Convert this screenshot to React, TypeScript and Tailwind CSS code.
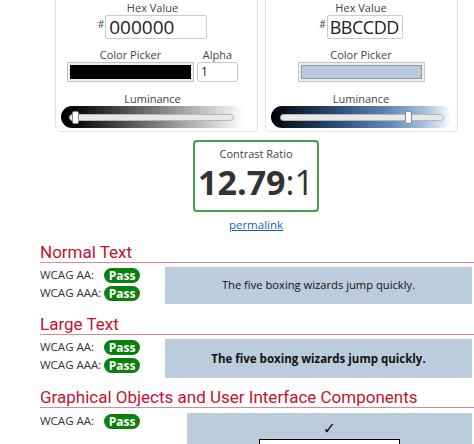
import React from 'react'

function Badge() {
  return (
    <span className="inline-block w-[36px] h-[15px] rounded-full bg-[#0c800c] text-white font-bold text-[12px] leading-[15px] text-center">
      Pass
    </span>
  )
}

function WcagRow({ label }: { label: string }) {
  return (
    <div className="flex items-center h-[18px]">
      <span className="w-[64px] text-[11.5px] text-[#333]">{label}</span>
      <Badge />
    </div>
  )
}

function Heading({ children }: { children: React.ReactNode }) {
  return (
    <h2 className="font-['Roboto',sans-serif] text-[17px] leading-[20px] text-[#c41230] border-b border-[#e2878f]">
      {children}
    </h2>
  )
}

export default function App() {
  return (
    <div className="w-[474px] h-[444px] overflow-hidden bg-white font-['Open_Sans',sans-serif] text-[#333]">
      <div className="w-[512px] flex flex-col">
        {/* Colour cards */}
        <div className="-mt-[13px] flex justify-center gap-[7px]">
          <div className="w-[203px] h-[145px] border border-[#e4e4e4] rounded-[5px] flex flex-col items-center pt-[13px] pr-[7px]">
            <div className="text-[11px] leading-[14px] text-[#444]">Hex Value</div>
            <div className="flex">
              <span className="text-[10px] leading-[10px] mt-[4px] mr-[1px] text-[#444]">#</span>
              <div className="w-[102px] h-[24px] border border-[#ccc] rounded-[2px] text-[19px] leading-[22px] pl-[3px] text-[#222]">
                000000
              </div>
            </div>
            <div className="flex items-end gap-[3px] mt-[8px]">
              <div className="flex flex-col items-center">
                <div className="text-[11px] leading-[15px] text-[#444]">Color Picker</div>
                <div className="w-[127px] h-[20px] border border-[#c4c4c4] bg-[#efefef] p-[2px]">
                  <div className="w-full h-full bg-black" />
                </div>
              </div>
              <div className="flex flex-col items-center">
                <div className="text-[11px] leading-[15px] text-[#444]">Alpha</div>
                <div className="w-[41px] h-[20px] border border-[#ccc] rounded-[2px] text-[12px] leading-[18px] pl-[3px] text-[#222]">
                  1
                </div>
              </div>
            </div>
            <div className="mt-[10px] text-[11px] leading-[14px] text-[#444]">Luminance</div>
            <div className="w-[184px] h-[22px] rounded-full bg-[linear-gradient(to_right,#000_0%,#000_5%,#777_50%,#fff_100%)] flex items-center pl-[8px] pr-[11px]">
              <div className="relative flex-1 h-[7px] rounded-full bg-[#e8e8e8] border border-[#b5b5b5]">
                <div className="absolute left-[2px] -top-[4px] w-[7px] h-[13px] rounded-[2px] bg-white border border-[#888]" />
              </div>
            </div>
          </div>

          <div className="w-[193px] h-[145px] border border-[#e4e4e4] rounded-[5px] flex flex-col items-center pt-[13px]">
            <div className="text-[11px] leading-[14px] text-[#444]">Hex Value</div>
            <div className="flex">
              <span className="text-[10px] leading-[10px] mt-[4px] mr-[1px] text-[#444]">#</span>
              <div className="w-[76px] h-[24px] border border-[#ccc] rounded-[2px] text-[18px] leading-[22px] tracking-[-0.5px] pl-[2px] text-[#222]">
                BBCCDD
              </div>
            </div>
            <div className="flex flex-col items-center mt-[8px]">
              <div className="text-[11px] leading-[15px] text-[#444]">Color Picker</div>
              <div className="w-[127px] h-[20px] border border-[#c4c4c4] bg-[#efefef] p-[2px]">
                <div className="w-full h-full bg-[#bbccdd] border border-[#8a98a6]" />
              </div>
            </div>
            <div className="mt-[10px] text-[11px] leading-[14px] text-[#444]">Luminance</div>
            <div className="w-[181px] h-[22px] rounded-full bg-[linear-gradient(to_right,#000_0%,#0a1520_8%,#2a4a72_35%,#5f88bb_65%,#aac0dc_85%,#fff_100%)] flex items-center pl-[9px] pr-[8px]">
              <div className="relative flex-1 h-[7px] rounded-full bg-[#e8e8e8] border border-[#b5b5b5]">
                <div className="absolute left-[124px] -top-[4px] w-[7px] h-[13px] rounded-[2px] bg-white border border-[#888]" />
              </div>
            </div>
          </div>
        </div>

        {/* Contrast ratio */}
        <div className="mt-[8px] self-center w-[126px] h-[72px] border-2 border-[#46a046] rounded-[4px] flex flex-col items-center pt-[5px]">
          <div className="text-[11px] leading-[14px] text-[#444]">Contrast Ratio</div>
          <div className="mt-[7px] text-[34px] leading-[28px] text-[#333]">
            <span className="font-bold">12.79</span>
            <span className="font-normal">:1</span>
          </div>
        </div>
        <a href="#" className="mt-[6px] self-center text-[11.5px] leading-[14px] text-[#1a5fb4] underline">
          permalink
        </a>

        {/* Normal text */}
        <section className="mt-[10px] ml-[40px] w-[434px]">
          <Heading>Normal Text</Heading>
          <div className="flex items-start mt-[3px]">
            <div className="w-[125px] flex flex-col">
              <WcagRow label="WCAG AA:" />
              <WcagRow label="WCAG AAA:" />
            </div>
            <div className="flex-1 mr-[2px] mt-[1px] h-[37px] bg-[#bbccdd] flex items-center justify-center text-[11.2px] text-[#111]">
              The five boxing wizards jump quickly.
            </div>
          </div>
        </section>

        {/* Large text */}
        <section className="mt-[10px] ml-[40px] w-[434px]">
          <Heading>Large Text</Heading>
          <div className="flex items-start mt-[3px]">
            <div className="w-[125px] flex flex-col">
              <WcagRow label="WCAG AA:" />
              <WcagRow label="WCAG AAA:" />
            </div>
            <div className="flex-1 mr-[2px] mt-[1px] h-[39px] bg-[#bbccdd] flex items-center justify-center text-[11.5px] font-bold text-[#111]">
              The five boxing wizards jump quickly.
            </div>
          </div>
        </section>

        {/* Graphical objects */}
        <section className="mt-[9px] ml-[40px] w-[434px]">
          <Heading>Graphical Objects and User Interface Components</Heading>
          <div className="flex items-start mt-[4px]">
            <div className="w-[147px] flex flex-col">
              <WcagRow label="WCAG AA:" />
            </div>
            <div className="flex-1 mr-[2px] mt-[1px] h-[60px] bg-[#bbccdd] flex flex-col items-center pt-[8px]">
              <span className="text-[16px] leading-[16px] font-bold text-[#111] font-['DejaVu_Sans',sans-serif]">✓</span>
              <div className="mt-[2px] w-[141px] h-[20px] bg-white border border-black" />
            </div>
          </div>
        </section>
      </div>
    </div>
  )
}
